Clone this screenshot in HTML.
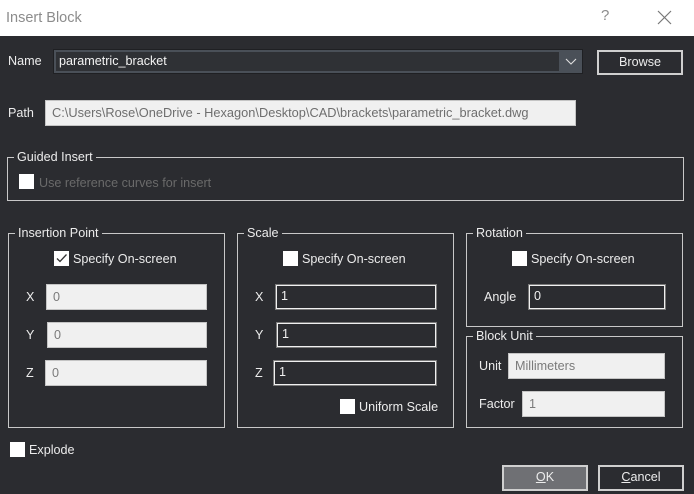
<!DOCTYPE html>
<html><head><meta charset="utf-8"><style>
*{box-sizing:border-box;margin:0;padding:0}
body{width:694px;height:494px;background:#2b2c30;font-family:"Liberation Sans",sans-serif;font-size:12.6px;color:#ececec;position:relative;overflow:hidden}
.a{position:absolute}
.t{position:absolute;white-space:nowrap;line-height:14px}
#title{left:0;top:0;width:694px;height:36px;background:#fff}
.grp{position:absolute;border:1px solid #c8c8c8}
.lg{position:absolute;top:-8px;left:6px;background:#2b2c30;padding:0 3px;line-height:14px;white-space:nowrap}
.cb{position:absolute;width:15px;height:15px;background:#fff}
.fd{position:absolute;background:#f0f0f0;border:1px solid #c4c4c4;color:#7a7a7a;padding:0 0 0 6px;line-height:22px}
.fe{position:absolute;background:#2b2c30;border:1.5px solid #f0f0f0;box-shadow:0 0 0 1px #7a7a7a;color:#f0f0f0;padding-left:4px;line-height:20px}
.btn{position:absolute;border:2px solid #cfcfcf;text-align:center;line-height:21px}
</style></head><body>
<div class="a" id="title"></div>
<div class="t" style="left:6px;top:10px;font-size:14.5px;line-height:16px;color:#8c8c8c">Insert Block</div>
<div class="t" style="left:601px;top:9px;font-size:15px;color:#8c8c8c">?</div>
<svg class="a" style="left:657px;top:10px" width="15" height="15"><path d="M1 1L14 14M14 1L1 14" stroke="#777" stroke-width="1.2"/></svg>

<div class="t" style="left:8px;top:54px">Name</div>
<div class="a" style="left:53px;top:49px;width:530px;height:25px;background:#4a5058;border:1px solid #1f2023"></div>
<div class="a" style="left:56px;top:52px;width:503px;height:19px;background:#2f3135"></div>
<div class="t" style="left:59px;top:54px;color:#f4f4f4">parametric_bracket</div>
<svg class="a" style="left:565px;top:58px" width="12" height="8"><path d="M1 1L6 6L11 1" stroke="#e0e0e0" fill="none" stroke-width="1.1"/></svg>
<div class="btn" style="left:597px;top:50px;width:86px;height:25px">Browse</div>

<div class="t" style="left:8px;top:106px">Path</div>
<div class="fd" style="left:45px;top:100px;width:531px;height:26px;line-height:24px;color:#6e6e6e;font-size:12.8px">C:\Users\Rose\OneDrive - Hexagon\Desktop\CAD\brackets\parametric_bracket.dwg</div>

<div class="grp" style="left:7px;top:157px;width:677px;height:44px"><div class="lg">Guided Insert</div></div>
<div class="cb" style="left:19px;top:174px"></div>
<div class="t" style="left:39px;top:176px;color:#6a6a6a">Use reference curves for insert</div>

<div class="grp" style="left:8px;top:233px;width:217px;height:195px"><div class="lg">Insertion Point</div></div>
<div class="cb" style="left:54px;top:251px"></div>
<svg class="a" style="left:54px;top:251px" width="15" height="15"><path d="M3 7.5L6 10.5L12.5 3.5" stroke="#333" fill="none" stroke-width="1.3"/></svg>
<div class="t" style="left:73px;top:252px">Specify On-screen</div>
<div class="t" style="left:26px;top:290px">X</div>
<div class="fd" style="left:46px;top:284px;width:161px;height:26px;line-height:24px">0</div>
<div class="t" style="left:26px;top:328px">Y</div>
<div class="fd" style="left:47px;top:322px;width:160px;height:26px;line-height:24px">0</div>
<div class="t" style="left:26px;top:366px">Z</div>
<div class="fd" style="left:45px;top:360px;width:162px;height:26px;line-height:24px">0</div>

<div class="grp" style="left:237px;top:233px;width:217px;height:195px"><div class="lg">Scale</div></div>
<div class="cb" style="left:283px;top:251px"></div>
<div class="t" style="left:302px;top:252px">Specify On-screen</div>
<div class="t" style="left:255px;top:290px">X</div>
<div class="fe" style="left:276px;top:285px;width:160px;height:24px">1</div>
<div class="t" style="left:255px;top:328px">Y</div>
<div class="fe" style="left:277px;top:323px;width:159px;height:24px">1</div>
<div class="t" style="left:255px;top:366px">Z</div>
<div class="fe" style="left:274px;top:361px;width:162px;height:24px">1</div>
<div class="cb" style="left:340px;top:399px"></div>
<div class="t" style="left:359px;top:400px">Uniform Scale</div>

<div class="grp" style="left:466px;top:233px;width:217px;height:94px"><div class="lg">Rotation</div></div>
<div class="cb" style="left:512px;top:251px"></div>
<div class="t" style="left:531px;top:252px">Specify On-screen</div>
<div class="t" style="left:484px;top:290px">Angle</div>
<div class="fe" style="left:529px;top:285px;width:136px;height:24px">0</div>

<div class="grp" style="left:466px;top:336px;width:217px;height:92px"><div class="lg">Block Unit</div></div>
<div class="t" style="left:479px;top:359px">Unit</div>
<div class="fd" style="left:508px;top:353px;width:157px;height:26px;line-height:24px">Millimeters</div>
<div class="t" style="left:479px;top:397px">Factor</div>
<div class="fd" style="left:522px;top:391px;width:143px;height:26px;line-height:24px">1</div>

<div class="cb" style="left:10px;top:442px"></div>
<div class="t" style="left:29px;top:443px">Explode</div>

<div class="btn" style="left:502px;top:465px;width:86px;height:26px;background:#6f7074"><u>O</u>K</div>
<div class="btn" style="left:598px;top:465px;width:86px;height:26px"><u>C</u>ancel</div>
</body></html>
